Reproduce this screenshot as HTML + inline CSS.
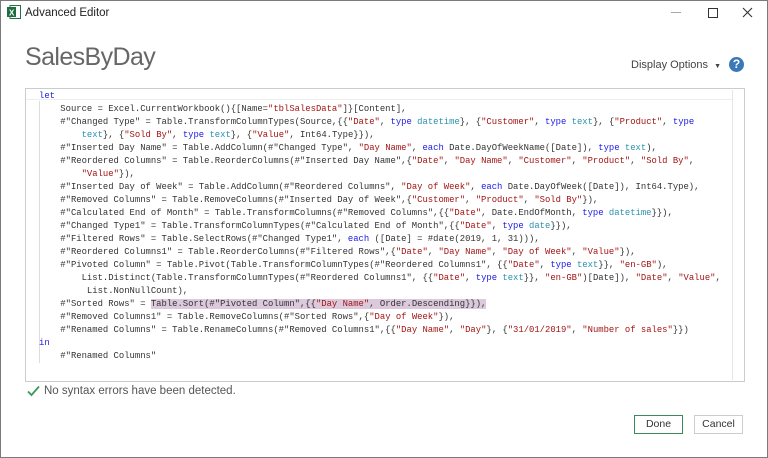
<!DOCTYPE html>
<html><head><meta charset="utf-8"><style>
body{margin:0;width:768px;height:458px;background:#fff;position:relative;overflow:hidden;font-family:"Liberation Sans",sans-serif}
.win{position:absolute;left:0;top:0;width:766px;height:456px;border:1px solid #7a7a7a}
.title{position:absolute;left:25px;top:7px;font-size:11.5px;color:#222}
.h1{position:absolute;left:25px;top:43px;font-size:25px;color:#666;letter-spacing:-0.6px}
.disp{position:absolute;left:631px;top:59px;font-size:11px;color:#444}
.help{position:absolute;left:729px;top:57px;width:15px;height:15px;border-radius:50%;background:#3a78b8;color:#fff;font-size:12px;font-weight:bold;text-align:center;line-height:15px}
.ed{position:absolute;left:25px;top:88px;height:292px;border:1px solid #ccc;width:718px}
.sb{position:absolute;top:90px;width:1px;height:290px;background:#e6e6e6;left:732px}
.hl{position:absolute;left:26px;top:89px;width:706px;height:10px;border-bottom:1px solid #eee}
.gut{position:absolute;left:39px;top:101px;width:1px;height:262px;background:#ddd}
pre{position:absolute;left:39px;top:90px;margin:0;font-family:"Liberation Mono",monospace;font-size:8.9px;line-height:13px;color:#333}
.k{color:#1a1ae6}.s{color:#a31515}.t{color:#2b91af}
.m{background:#dcc9dc}
.ok{position:absolute;left:44px;top:385px;font-size:11.5px;color:#555}
.btn{position:absolute;top:415px;height:17px;border:1px solid #ccc;font-size:10.5px;color:#333;text-align:center;line-height:17px}
</style></head><body>
<div class="win"></div>
<svg style="position:absolute;left:7px;top:5px" width="14" height="14"><rect x="3" y="0.5" width="10.5" height="13" fill="#fff" stroke="#217346"/><rect x="0" y="2" width="9" height="10" fill="#1d6f42"/><text x="2" y="10.5" font-size="8" fill="#fff" font-family="Liberation Sans" font-weight="bold">X</text></svg>
<div class="title">Advanced Editor</div>
<div style="position:absolute;left:671px;top:12px;width:10px;height:1px;background:#aaa"></div>
<div style="position:absolute;left:708px;top:8px;width:8px;height:8px;border:1px solid #333"></div>
<svg style="position:absolute;left:742px;top:7px" width="11" height="11"><path d="M1 1L10 10M10 1L1 10" stroke="#333" stroke-width="1.1"/></svg>
<div class="h1">SalesByDay</div>
<div class="disp">Display Options &nbsp;<span style="font-size:7px">▼</span></div>
<div class="help">?</div>
<div class="ed"></div><div class="hl"></div><div class="sb"></div><div class="gut"></div>
<pre><span class="k">let</span>
    Source = Excel.CurrentWorkbook(){[Name=<span class="s">"tblSalesData"</span>]}[Content],
    #"Changed Type" = Table.TransformColumnTypes(Source,{{<span class="s">"Date"</span>, <span class="k">type</span> <span class="t">datetime</span>}, {<span class="s">"Customer"</span>, <span class="k">type</span> <span class="t">text</span>}, {<span class="s">"Product"</span>, <span class="k">type</span>
        <span class="t">text</span>}, {<span class="s">"Sold By"</span>, <span class="k">type</span> <span class="t">text</span>}, {<span class="s">"Value"</span>, Int64.Type}}),
    #"Inserted Day Name" = Table.AddColumn(#"Changed Type", <span class="s">"Day Name"</span>, <span class="k">each</span> Date.DayOfWeekName([Date]), <span class="k">type</span> <span class="t">text</span>),
    #"Reordered Columns" = Table.ReorderColumns(#"Inserted Day Name",{<span class="s">"Date"</span>, <span class="s">"Day Name"</span>, <span class="s">"Customer"</span>, <span class="s">"Product"</span>, <span class="s">"Sold By"</span>,
        <span class="s">"Value"</span>}),
    #"Inserted Day of Week" = Table.AddColumn(#"Reordered Columns", <span class="s">"Day of Week"</span>, <span class="k">each</span> Date.DayOfWeek([Date]), Int64.Type),
    #"Removed Columns" = Table.RemoveColumns(#"Inserted Day of Week",{<span class="s">"Customer"</span>, <span class="s">"Product"</span>, <span class="s">"Sold By"</span>}),
    #"Calculated End of Month" = Table.TransformColumns(#"Removed Columns",{{<span class="s">"Date"</span>, Date.EndOfMonth, <span class="k">type</span> <span class="t">datetime</span>}}),
    #"Changed Type1" = Table.TransformColumnTypes(#"Calculated End of Month",{{<span class="s">"Date"</span>, <span class="k">type</span> <span class="t">date</span>}}),
    #"Filtered Rows" = Table.SelectRows(#"Changed Type1", <span class="k">each</span> ([Date] = #date(2019, 1, 31))),
    #"Reordered Columns1" = Table.ReorderColumns(#"Filtered Rows",{<span class="s">"Date"</span>, <span class="s">"Day Name"</span>, <span class="s">"Day of Week"</span>, <span class="s">"Value"</span>}),
    #"Pivoted Column" = Table.Pivot(Table.TransformColumnTypes(#"Reordered Columns1", {{<span class="s">"Date"</span>, <span class="k">type</span> <span class="t">text</span>}}, <span class="s">"en-GB"</span>),
        List.Distinct(Table.TransformColumnTypes(#"Reordered Columns1", {{<span class="s">"Date"</span>, <span class="k">type</span> <span class="t">text</span>}}, <span class="s">"en-GB"</span>)[Date]), <span class="s">"Date"</span>, <span class="s">"Value"</span>,
         List.NonNullCount),
    #"Sorted Rows" = <span class="m">Table.Sort(#"Pivoted Column",{{<span class="s">"Day Name"</span>, Order.Descending}}),</span>
    #"Removed Columns1" = Table.RemoveColumns(#"Sorted Rows",{<span class="s">"Day of Week"</span>}),
    #"Renamed Columns" = Table.RenameColumns(#"Removed Columns1",{{<span class="s">"Day Name"</span>, <span class="s">"Day"</span>}, {<span class="s">"31/01/2019"</span>, <span class="s">"Number of sales"</span>}})
<span class="k">in</span>
    #"Renamed Columns"</pre>
<svg style="position:absolute;left:27px;top:385px" width="13" height="12"><path d="M1 6.5L4.5 10L12 1.5" stroke="#3a9a5a" stroke-width="1.8" fill="none"/></svg>
<div class="ok">No syntax errors have been detected.</div>
<div class="btn" style="left:634px;width:47px;border-color:#3c8a5a">Done</div>
<div class="btn" style="left:694px;width:47px">Cancel</div>
</body></html>
